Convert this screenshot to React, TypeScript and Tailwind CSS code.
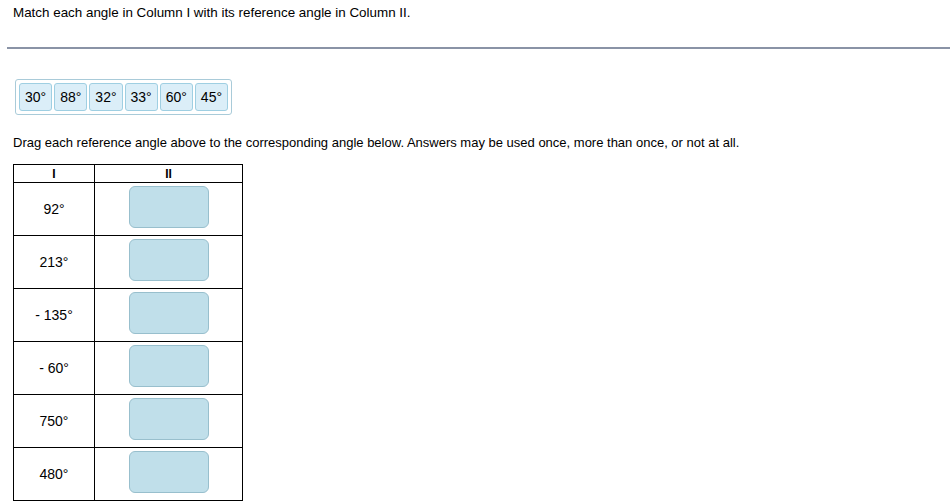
import React from "react";

const choices = ["30°", "88°", "32°", "33°", "60°", "45°"];
const angles = ["92°", "213°", "- 135°", "- 60°", "750°", "480°"];

export default function App() {
  return (
    <div className="w-[950px] h-[503px] overflow-hidden bg-white text-black font-['Liberation_Sans',Arial,sans-serif]">
      {/* Question */}
      <div className="pl-[13px] pt-[5px] text-[13.4px] leading-[16px]">
        Match each angle in Column I with its reference angle in Column II.
      </div>
      <div className="ml-[7px] mt-[26px] h-[2px] bg-[#8a93a6]" />

      {/* Answer bank */}
      <div className="ml-[15px] mt-[30px] inline-flex gap-[2px] p-[3px] border border-[#a9cbd9] rounded-[3px]">
        {choices.map((c) => (
          <div
            key={c}
            className="h-[28px] px-[5px] flex items-center bg-[#dbeef8] border border-[#9fcfe2] rounded-[3px] text-[14px]"
          >
            {c}
          </div>
        ))}
      </div>

      <div className="pl-[13px] mt-[20px] text-[13px] leading-[15px]">
        Drag each reference angle above to the corresponding angle below. Answers may be used once, more than once, or not at all.
      </div>

      {/* Matching table */}
      <table className="ml-[13px] mt-[14px] border-collapse text-[14px]">
        <thead>
          <tr className="h-[18px]">
            <th className="w-[81px] border border-black font-bold text-[12px] leading-[14px] p-0">I</th>
            <th className="w-[148px] border border-black font-bold text-[12px] leading-[14px] p-0">II</th>
          </tr>
        </thead>
        <tbody>
          {angles.map((a) => (
            <tr key={a} className="h-[53px]">
              <td className="border border-black text-center p-0">{a}</td>
              <td className="border border-black p-0 align-top">
                <div className="mx-auto mt-[3px] w-[80px] h-[42px] bg-[#c0dfea] border border-[#98bfcd] rounded-[6px]" />
              </td>
            </tr>
          ))}
        </tbody>
      </table>
    </div>
  );
}
